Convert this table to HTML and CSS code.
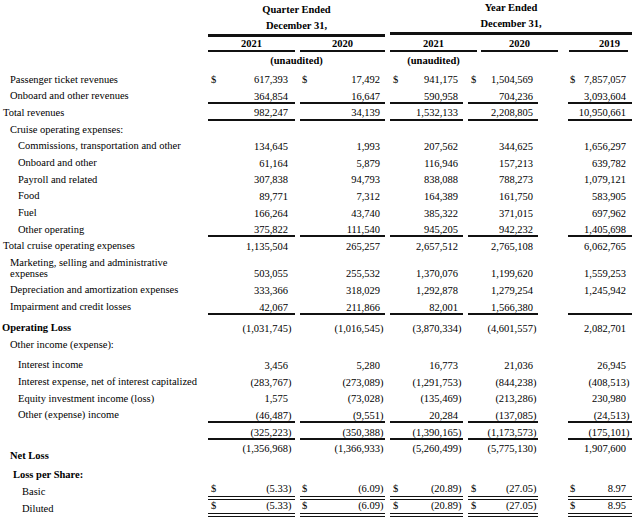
FILE: index.html
```html
<!DOCTYPE html>
<html>
<head>
<meta charset="utf-8">
<link rel="stylesheet" href="styles.css">
</head>
<body>
<div class="sheet">
  <div class="head">
    <div class="head-spacer"></div>
    <div class="grp grp-q">
      <div class="t1">Quarter Ended</div>
      <div class="t2">December 31,</div>
      <div class="yrs">
        <div class="yr yq1">2021</div>
        <div class="yr yq2">2020</div>
      </div>
      <div class="unaud">(unaudited)</div>
    </div>
    <div class="grp grp-y">
      <div class="t1">Year Ended</div>
      <div class="t2">December 31,</div>
      <div class="yrs yrs-y">
        <div class="yr yy1">2021</div>
        <div class="yr yy2">2020</div>
        <div class="yr yy3">2019</div>
      </div>
      <div class="unaud unaud-y">(unaudited)</div>
    </div>
  </div>

  <div class="row">
    <div class="lab i1">Passenger ticket revenues</div>
    <div class="c c1"><span class="d">$</span><span class="n">617,393</span></div>
    <div class="c c2"><span class="d">$</span><span class="n">17,492</span></div>
    <div class="c c3"><span class="d">$</span><span class="n">941,175</span></div>
    <div class="c c4"><span class="d">$</span><span class="n">1,504,569</span></div>
    <div class="c c5"><span class="d">$</span><span class="n">7,857,057</span></div>
  </div>
  <div class="row ul">
    <div class="lab i1">Onboard and other revenues</div>
    <div class="c c1"><span class="n">364,854</span></div>
    <div class="c c2"><span class="n">16,647</span></div>
    <div class="c c3"><span class="n">590,958</span></div>
    <div class="c c4"><span class="n">704,236</span></div>
    <div class="c c5"><span class="n">3,093,604</span></div>
  </div>
  <div class="row ul">
    <div class="lab i0">Total revenues</div>
    <div class="c c1"><span class="n">982,247</span></div>
    <div class="c c2"><span class="n">34,139</span></div>
    <div class="c c3"><span class="n">1,532,133</span></div>
    <div class="c c4"><span class="n">2,208,805</span></div>
    <div class="c c5"><span class="n">10,950,661</span></div>
  </div>
  <div class="row">
    <div class="lab i1">Cruise operating expenses:</div>
  </div>
  <div class="row">
    <div class="lab i2">Commissions, transportation and other</div>
    <div class="c c1"><span class="n">134,645</span></div>
    <div class="c c2"><span class="n">1,993</span></div>
    <div class="c c3"><span class="n">207,562</span></div>
    <div class="c c4"><span class="n">344,625</span></div>
    <div class="c c5"><span class="n">1,656,297</span></div>
  </div>
  <div class="row">
    <div class="lab i2">Onboard and other</div>
    <div class="c c1"><span class="n">61,164</span></div>
    <div class="c c2"><span class="n">5,879</span></div>
    <div class="c c3"><span class="n">116,946</span></div>
    <div class="c c4"><span class="n">157,213</span></div>
    <div class="c c5"><span class="n">639,782</span></div>
  </div>
  <div class="row">
    <div class="lab i2">Payroll and related</div>
    <div class="c c1"><span class="n">307,838</span></div>
    <div class="c c2"><span class="n">94,793</span></div>
    <div class="c c3"><span class="n">838,088</span></div>
    <div class="c c4"><span class="n">788,273</span></div>
    <div class="c c5"><span class="n">1,079,121</span></div>
  </div>
  <div class="row">
    <div class="lab i2">Food</div>
    <div class="c c1"><span class="n">89,771</span></div>
    <div class="c c2"><span class="n">7,312</span></div>
    <div class="c c3"><span class="n">164,389</span></div>
    <div class="c c4"><span class="n">161,750</span></div>
    <div class="c c5"><span class="n">583,905</span></div>
  </div>
  <div class="row">
    <div class="lab i2">Fuel</div>
    <div class="c c1"><span class="n">166,264</span></div>
    <div class="c c2"><span class="n">43,740</span></div>
    <div class="c c3"><span class="n">385,322</span></div>
    <div class="c c4"><span class="n">371,015</span></div>
    <div class="c c5"><span class="n">697,962</span></div>
  </div>
  <div class="row ul">
    <div class="lab i2">Other operating</div>
    <div class="c c1"><span class="n">375,822</span></div>
    <div class="c c2"><span class="n">111,540</span></div>
    <div class="c c3"><span class="n">945,205</span></div>
    <div class="c c4"><span class="n">942,232</span></div>
    <div class="c c5"><span class="n">1,405,698</span></div>
  </div>
  <div class="row">
    <div class="lab i0">Total cruise operating expenses</div>
    <div class="c c1"><span class="n">1,135,504</span></div>
    <div class="c c2"><span class="n">265,257</span></div>
    <div class="c c3"><span class="n">2,657,512</span></div>
    <div class="c c4"><span class="n">2,765,108</span></div>
    <div class="c c5"><span class="n">6,062,765</span></div>
  </div>
  <div class="row row-tall">
    <div class="lab i1 lab-wrap">Marketing, selling and administrative<br>expenses</div>
    <div class="c c1"><span class="n">503,055</span></div>
    <div class="c c2"><span class="n">255,532</span></div>
    <div class="c c3"><span class="n">1,370,076</span></div>
    <div class="c c4"><span class="n">1,199,620</span></div>
    <div class="c c5"><span class="n">1,559,253</span></div>
  </div>
  <div class="row">
    <div class="lab i1">Depreciation and amortization expenses</div>
    <div class="c c1"><span class="n">333,366</span></div>
    <div class="c c2"><span class="n">318,029</span></div>
    <div class="c c3"><span class="n">1,292,878</span></div>
    <div class="c c4"><span class="n">1,279,254</span></div>
    <div class="c c5"><span class="n">1,245,942</span></div>
  </div>
  <div class="row ul">
    <div class="lab i1">Impairment and credit losses</div>
    <div class="c c1"><span class="n">42,067</span></div>
    <div class="c c2"><span class="n">211,866</span></div>
    <div class="c c3"><span class="n">82,001</span></div>
    <div class="c c4"><span class="n">1,566,380</span></div>
    <div class="c c5"></div>
  </div>
  <div class="row row-oploss">
    <div class="lab i00 b">Operating Loss</div>
    <div class="c c1"><span class="n neg">(1,031,745)</span></div>
    <div class="c c2"><span class="n neg">(1,016,545)</span></div>
    <div class="c c3"><span class="n neg">(3,870,334)</span></div>
    <div class="c c4"><span class="n neg">(4,601,557)</span></div>
    <div class="c c5"><span class="n">2,082,701</span></div>
  </div>
  <div class="row row-other">
    <div class="lab i1">Other income (expense):</div>
  </div>
  <div class="row">
    <div class="lab i2">Interest income</div>
    <div class="c c1"><span class="n">3,456</span></div>
    <div class="c c2"><span class="n">5,280</span></div>
    <div class="c c3"><span class="n">16,773</span></div>
    <div class="c c4"><span class="n">21,036</span></div>
    <div class="c c5"><span class="n">26,945</span></div>
  </div>
  <div class="row">
    <div class="lab i2">Interest expense, net of interest capitalized</div>
    <div class="c c1"><span class="n neg">(283,767)</span></div>
    <div class="c c2"><span class="n neg">(273,089)</span></div>
    <div class="c c3"><span class="n neg">(1,291,753)</span></div>
    <div class="c c4"><span class="n neg">(844,238)</span></div>
    <div class="c c5"><span class="n neg">(408,513)</span></div>
  </div>
  <div class="row">
    <div class="lab i2">Equity investment income (loss)</div>
    <div class="c c1"><span class="n">1,575</span></div>
    <div class="c c2"><span class="n neg">(73,028)</span></div>
    <div class="c c3"><span class="n neg">(135,469)</span></div>
    <div class="c c4"><span class="n neg">(213,286)</span></div>
    <div class="c c5"><span class="n">230,980</span></div>
  </div>
  <div class="row ul">
    <div class="lab i2">Other (expense) income</div>
    <div class="c c1"><span class="n neg">(46,487)</span></div>
    <div class="c c2"><span class="n neg">(9,551)</span></div>
    <div class="c c3"><span class="n">20,284</span></div>
    <div class="c c4"><span class="n neg">(137,085)</span></div>
    <div class="c c5"><span class="n neg">(24,513)</span></div>
  </div>
  <div class="row ul">
    <div class="lab"></div>
    <div class="c c1"><span class="n neg">(325,223)</span></div>
    <div class="c c2"><span class="n neg">(350,388)</span></div>
    <div class="c c3"><span class="n neg">(1,390,165)</span></div>
    <div class="c c4"><span class="n neg">(1,173,573)</span></div>
    <div class="c c5"><span class="n neg">(175,101)</span></div>
  </div>
  <div class="row row-net">
    <div class="lab i1 b lab-low">Net Loss</div>
    <div class="c c1"><span class="n neg">(1,356,968)</span></div>
    <div class="c c2"><span class="n neg">(1,366,933)</span></div>
    <div class="c c3"><span class="n neg">(5,260,499)</span></div>
    <div class="c c4"><span class="n neg">(5,775,130)</span></div>
    <div class="c c5"><span class="n">1,907,600</span></div>
  </div>
  <div class="row row-lps">
    <div class="lab i1s b">Loss per Share:</div>
  </div>
  <div class="row row-eps">
    <div class="lab i3">Basic</div>
    <div class="c c1"><span class="d">$</span><span class="n neg">(5.33)</span></div>
    <div class="c c2"><span class="d">$</span><span class="n neg">(6.09)</span></div>
    <div class="c c3"><span class="d">$</span><span class="n neg">(20.89)</span></div>
    <div class="c c4"><span class="d">$</span><span class="n neg">(27.05)</span></div>
    <div class="c c5"><span class="d">$</span><span class="n">8.97</span></div>
  </div>
  <div class="row row-eps">
    <div class="lab i3">Diluted</div>
    <div class="c c1"><span class="d">$</span><span class="n neg">(5.33)</span></div>
    <div class="c c2"><span class="d">$</span><span class="n neg">(6.09)</span></div>
    <div class="c c3"><span class="d">$</span><span class="n neg">(20.89)</span></div>
    <div class="c c4"><span class="d">$</span><span class="n neg">(27.05)</span></div>
    <div class="c c5"><span class="d">$</span><span class="n">8.95</span></div>
  </div>
</div>
</body>
</html>
```

FILE: styles.css
```css
* {
  box-sizing: border-box;
  margin: 0;
  padding: 0;
}

html, body {
  background: #ffffff;
}

body {
  width: 640px;
  height: 517px;
  overflow: hidden;
  color: #000000;
  font-family: "Liberation Serif", "Times New Roman", serif;
  font-size: 10.5px;
}

.sheet {
  width: 640px;
}

/* ---------- header ---------- */
.head {
  display: flex;
  height: 70.6px;
}

.head-spacer {
  width: 208px;
  flex: none;
}

.grp {
  display: flex;
  flex-direction: column;
  font-weight: bold;
  flex: none;
}

.grp-q {
  width: 177px;
  padding-top: 2px;
}

.grp-y {
  width: 242px;
  margin-left: 5px;
}

.t1 {
  height: 16px;
  line-height: 16px;
  text-align: center;
}

.t2 {
  height: 18.5px;
  line-height: 16px;
  text-align: center;
  border-bottom: 3px solid #111;
}

.yrs {
  display: flex;
  height: 15.5px;
}

.yrs-y {
  margin-top: 2px;
}

.yr {
  height: 15.5px;
  line-height: 13.5px;
  text-align: center;
  border-bottom: 2px solid #111;
  flex: none;
}

.yq1 { width: 87px; }
.yq2 { width: 85px; margin-left: 5px; }
.yy1 { width: 87px; }
.yy2 { width: 77px; margin-left: 4px; }
.yy3 { width: 59px; margin-left: 11px; text-align: right; padding-right: 8px; }

.unaud {
  line-height: 18px;
  text-align: center;
}

.unaud-y {
  width: 87px;
}

/* ---------- body rows ---------- */
.row {
  display: flex;
  align-items: flex-end;
  height: 16.7px;
}

.lab {
  width: 208px;
  flex: none;
  height: 16.7px;
  padding-top: 1px;
  line-height: 16.7px;
  white-space: nowrap;
}

.i00 { padding-left: 2px; }
.i0 { padding-left: 3px; }
.i1 { padding-left: 10px; }
.i1s { padding-left: 13px; }
.i2 { padding-left: 18px; }
.i3 { padding-left: 22px; }

.b { font-weight: bold; }

.c {
  display: flex;
  align-items: flex-start;
  height: 16.7px;
  padding-top: 3.5px;
  line-height: 12px;
  flex: none;
}

.c1 { width: 87px; padding-left: 3px; padding-right: 7px; }
.c2 { width: 85px; margin-left: 5px; padding-left: 2px; padding-right: 5px; }
.c3 { width: 73px; margin-left: 5px; padding-left: 3px; padding-right: 5px; }
.c4 { width: 70px; margin-left: 5px; padding-left: 3px; padding-right: 5px; }
.c5 { width: 64px; margin-left: 30px; padding-left: 2px; padding-right: 6px; }

.n {
  margin-left: auto;
  white-space: nowrap;
}

.neg {
  margin-right: -3.5px;
}

.ul .c {
  border-bottom: 2px solid #111;
}

/* special rows */
.row-tall {
  height: 27.3px;
}

.lab-wrap {
  align-self: flex-start;
  height: auto;
  padding-top: 2.6px;
  line-height: 11px;
}

.row-oploss {
  height: 21.3px;
}

.row-other {
  height: 20.3px;
  align-items: flex-start;
}

.row-net {
  height: 24.2px;
  align-items: flex-start;
}

.lab-low {
  align-self: flex-end;
}

.row-lps {
  height: 19px;
}

.row-eps {
  height: 16.8px;
}

.row-eps .lab {
  height: 16.8px;
  line-height: 16.8px;
}

.row-eps .c {
  height: 16.8px;
  padding-top: 0;
  align-items: center;
  line-height: 12.8px;
  border-bottom: 4px double #111;
}
```
